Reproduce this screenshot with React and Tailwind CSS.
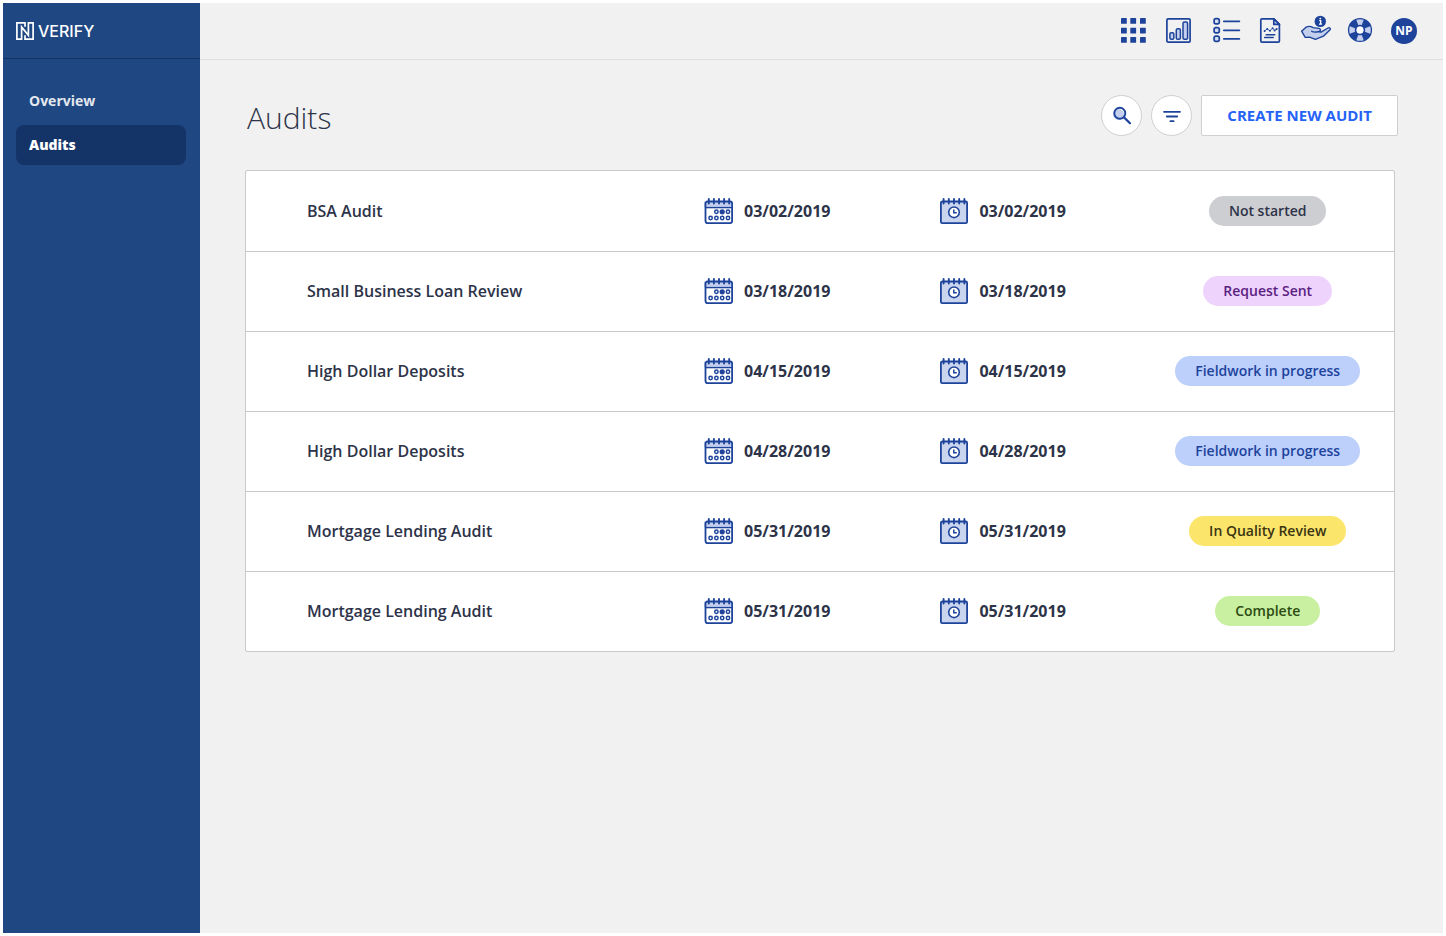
import { useState } from 'react';
import clsx from 'clsx';

const NAV_ITEMS = ['Overview', 'Audits'];

const AUDITS = [
  { id: 1, name: 'BSA Audit', start: '03/02/2019', due: '03/02/2019', status: 'Not started' },
  { id: 2, name: 'Small Business Loan Review', start: '03/18/2019', due: '03/18/2019', status: 'Request Sent' },
  { id: 3, name: 'High Dollar Deposits', start: '04/15/2019', due: '04/15/2019', status: 'Fieldwork in progress' },
  { id: 4, name: 'High Dollar Deposits', start: '04/28/2019', due: '04/28/2019', status: 'Fieldwork in progress' },
  { id: 5, name: 'Mortgage Lending Audit', start: '05/31/2019', due: '05/31/2019', status: 'In Quality Review' },
  { id: 6, name: 'Mortgage Lending Audit', start: '05/31/2019', due: '05/31/2019', status: 'Complete' },
];

const STATUS_STYLES = {
  'Not started': 'bg-[#cdced2] text-[#2d3348]',
  'Request Sent': 'bg-[#eed4fd] text-[#5b2181]',
  'Fieldwork in progress': 'bg-[#bcd0fb] text-[#1d439b]',
  'In Quality Review': 'bg-[#fbe56a] text-[#3a3413]',
  Complete: 'bg-[#c8f0a0] text-[#2c4a12]',
};

const Logo = () => (
  <svg className="w-[18px] h-[18px]" viewBox="0 0 18 18" fill="none" stroke="#fff" strokeWidth="1.7">
    <path d="M9 4.8V.9H.9v16.2h4.7V5l6.8 8.4V.9h4.7v16.2H9v-3.9" />
  </svg>
);

const GridIcon = () => (
  <svg className="w-8 h-8" viewBox="0 0 32 32" fill="#1d439b">
    {[3, 12.7, 22].map((y) =>
      [4, 13.3, 23].map((x) => <rect key={`${x}-${y}`} x={x} y={y} width="5.8" height="5.8" rx=".4" />)
    )}
  </svg>
);

const ChartIcon = () => (
  <svg className="w-8 h-8" viewBox="0 0 32 32" fill="none" stroke="#1d439b" strokeWidth="1.7">
    <rect x="1.9" y="3.9" width="23.2" height="23.2" rx="1.2" />
    <g fill="#c3cfec" strokeWidth="1.5">
      <rect x="4.9" y="17.7" width="3.9" height="6.6" rx="1.4" />
      <rect x="11.3" y="13.7" width="4.1" height="10.6" rx="1.4" />
      <rect x="18" y="7" width="4.6" height="17.3" rx="1.4" />
    </g>
  </svg>
);

const ListIcon = () => (
  <svg className="w-[30px] h-8" viewBox="0 0 30 32" fill="none" stroke="#1d439b" strokeWidth="1.7" strokeLinecap="round">
    {[6.3, 15.3, 23.8].map((y) => (
      <g key={y}>
        <rect x="1.1" y={y - 2.6} width="5.2" height="5.2" rx="1.8" fill="#d5ddf0" />
        <path d={`M10.8 ${y}H26.4`} />
      </g>
    ))}
  </svg>
);

const ReportIcon = () => (
  <svg className="w-6 h-8" viewBox="0 0 24 32" fill="none" stroke="#1d439b" strokeWidth="1.7" strokeLinecap="round" strokeLinejoin="round">
    <path d="M14.8 3.8H3A1.2 1.2 0 0 0 1.8 5v21A1.2 1.2 0 0 0 3 27.2h16.2a1.2 1.2 0 0 0 1.2-1.2V9.4z" />
    <path d="M14.8 3.8v5.6h5.6z" fill="#c3cfec" />
    <path d="M5.6 16l2.6-2 2.8 1.800 2.600-2.600 2 2.200 2.200-1.400" strokeWidth=".8" />
    <g fill="#1d439b" stroke="none">
      <circle cx="5.6" cy="16" r="1" />
      <circle cx="8.2" cy="14" r="1" />
      <circle cx="11" cy="15.8" r="1" />
      <circle cx="13.6" cy="13.2" r="1" />
      <circle cx="15.6" cy="15.4" r="1" />
      <circle cx="17.6" cy="14" r="1" />
    </g>
    <path d="M7.2 19.7h8.600M5.600 22.600h8.600" strokeWidth="1.5" />
  </svg>
);

const HandIcon = () => (
  <svg className="w-8 h-8" viewBox="0 0 32 32" fill="none">
    <path
      d="M2.6 16.2L7 12.2c2-1 5-1 7 .4l6 .8c1.8.4 2 2.6.2 3.2l1.8.6 7-4.200c1.800-1 3 .6 1.800 2l-6.400 6.200-8 3.200-5.800-2.200-4.400.2z"
      fill="#c3cfec"
      stroke="#1d439b"
      strokeWidth="1.4"
      strokeLinejoin="round"
    />
    <path d="M12.6 16.2c1.4.9 3.2 1 4.8.8l3.4-.5" stroke="#1d439b" strokeWidth="1.3" strokeLinecap="round" />
    <circle cx="21.3" cy="6.4" r="5.7" fill="#1d439b" />
    <path d="M20.2 5.6h1.5v3.4M20 9.2h3" stroke="#fff" strokeWidth="1.3" />
    <circle cx="21.3" cy="3.6" r=".9" fill="#fff" />
  </svg>
);

const HelpIcon = () => (
  <svg className="w-7 h-8" viewBox="0 0 28 32" fill="none">
    <circle cx="13" cy="15" r="7.8" stroke="#1d439b" strokeWidth="8.6" />
    <circle
      cx="13"
      cy="15"
      r="8"
      stroke="#c3cfec"
      strokeWidth="5.6"
      pathLength="80"
      strokeDasharray="9 11"
      strokeDashoffset="4.5"
    />
    <circle cx="13" cy="15" r="3.4" fill="#fff" />
  </svg>
);

const SearchIcon = () => (
  <svg className="w-5 h-5" viewBox="0 0 20 20" fill="none">
    <circle cx="6.6" cy="8.4" r="5.4" fill="#c3cfec" />
    <circle cx="7.8" cy="7.2" r="5.5" stroke="#1d439b" strokeWidth="1.9" />
    <path d="M12 11.4l6 5.8" stroke="#1d439b" strokeWidth="2.2" strokeLinecap="round" />
  </svg>
);

const FilterIcon = () => (
  <svg className="w-5 h-5" viewBox="0 0 20 20" stroke="#1d439b" strokeWidth="1.8" strokeLinecap="round">
    <path d="M2 5.8h16M4.8 10.5h10.4M8.4 15.2h3.2" />
  </svg>
);

const CalendarIcon = () => (
  <svg className="w-[30px] h-7" viewBox="0 0 30 28" fill="none" stroke="#1d439b">
    <path d="M0 4.500h27.400v6H0z" fill="#c3cfec" stroke="none" />
    <rect x="1.5" y="4.5" width="26.6" height="21.6" rx="2" strokeWidth="1.8" />
    <path d="M2 10.6h26" strokeWidth="1.4" />
    <path d="M4.8 2v4.600M9.900 2v4.600M15 2v4.600M20.100 2v4.600M25.200 2v4.600" strokeWidth="1.9" strokeLinecap="round" />
    <g strokeWidth="1.5">
      <circle cx="12.4" cy="14.8" r="1.7" />
      <circle cx="18.2" cy="14.8" r="1.9" fill="#1d439b" />
      <circle cx="24" cy="14.8" r="1.7" />
      <circle cx="6.6" cy="21" r="1.7" />
      <circle cx="12.4" cy="21" r="1.7" />
      <circle cx="18.2" cy="21" r="1.7" />
      <circle cx="24" cy="21" r="1.7" />
    </g>
  </svg>
);

const DeadlineIcon = () => (
  <svg className="w-[30px] h-7" viewBox="0 0 30 28" fill="none" stroke="#1d439b">
    <rect x="1.9" y="4.5" width="26.2" height="21.6" rx="1.4" fill="#c9d4ee" strokeWidth="1.8" />
    <path d="M4.6 2v4.600M9.800 2v4.600M15 2v4.600M20.200 2v4.600M25.400 2v4.600" strokeWidth="1.9" strokeLinecap="round" />
    <circle cx="15" cy="15.3" r="5.3" fill="#fff" strokeWidth="1.6" />
    <path d="M14.8 12.6v3.100h3" strokeWidth="1.5" />
  </svg>
);

const HEADER_LINKS = [
  { label: 'Apps', Icon: GridIcon },
  { label: 'Analytics', Icon: ChartIcon },
  { label: 'Tasks', Icon: ListIcon },
  { label: 'Reports', Icon: ReportIcon },
  { label: 'Services', Icon: HandIcon },
  { label: 'Help', Icon: HelpIcon },
];

const App = () => {
  const [active, setActive] = useState('Audits');

  return (
    <div className="min-h-screen bg-white p-[3px] flex font-['Open_Sans',sans-serif] text-[#2d3348]">
      {/* Sidebar */}
      <aside className="w-[197px] shrink-0 bg-[#1f4782]">
        <div className="h-14 px-[13px] flex items-center gap-1 border-b border-[#143468]">
          <Logo />
          <span className="font-['Inter',sans-serif] text-base font-medium text-white">VERIFY</span>
        </div>
        <nav className="flex flex-col gap-1 pt-[22px] pl-[13px] pr-3.5">
          {NAV_ITEMS.map((item) => (
            <a
              key={item}
              href={`#${item.toLowerCase()}`}
              onClick={() => setActive(item)}
              className={clsx(
                'h-10 px-[13px] flex items-center rounded-lg text-sm',
                active === item ? 'bg-[#143468] text-white font-extrabold' : 'text-[#e4e8ef] font-bold'
              )}
            >
              {item}
            </a>
          ))}
        </nav>
      </aside>

      <div className="flex-1 min-w-0 bg-[#f1f1f1]">
        {/* Top bar */}
        <header className="h-[57px] pr-[26px] flex items-center justify-end gap-4 border-b border-[#dedede]">
          {HEADER_LINKS.map(({ label, Icon }) => (
            <button key={label} type="button" aria-label={label}>
              <Icon />
            </button>
          ))}
          <button type="button" className="w-[26px] h-[26px] rounded-full bg-[#1d439b] text-white text-xs font-bold">
            NP
          </button>
        </header>

        <main className="pl-[45px] pr-12">
          {/* Title and actions */}
          <div className="pt-[35px] flex items-center justify-between -mr-[3px]">
            <h1 className="text-3xl font-light pl-0.5 pt-1">Audits</h1>
            <div className="flex gap-[9px]">
              <button type="button" aria-label="Search" className="w-[41px] h-[41px] rounded-full border border-[#cfcfd2] bg-white flex items-center justify-center">
                <SearchIcon />
              </button>
              <button type="button" aria-label="Filter" className="w-[41px] h-[41px] rounded-full border border-[#cfcfd2] bg-white flex items-center justify-center">
                <FilterIcon />
              </button>
              <button type="button" className="h-[41px] px-[25px] rounded-xs border border-[#cfcfd2] bg-white text-[15px] font-bold text-[#2563f5]">
                CREATE NEW AUDIT
              </button>
            </div>
          </div>

          {/* Audit list */}
          <div className="mt-[34px] rounded-xs border border-[#c8c9cb] bg-white">
            <table className="w-full table-fixed">
              <colgroup>
                <col className="w-[39.9%]" />
                <col className="w-[20.5%]" />
                <col className="w-[17.6%]" />
                <col className="w-[22%]" />
              </colgroup>
              <tbody>
                {AUDITS.map((audit) => (
                  <tr key={audit.id} className="h-20 border-b border-[#c8c9cb] last:border-b-0">
                    <td className="pl-[61px] text-base font-semibold">{audit.name}</td>
                    <td>
                      <div className="flex items-center gap-2.5 font-bold">
                        <CalendarIcon />
                        {audit.start}
                      </div>
                    </td>
                    <td>
                      <div className="flex items-center gap-2.5 font-bold">
                        <DeadlineIcon />
                        {audit.due}
                      </div>
                    </td>
                    <td className="text-center">
                      <span className={clsx('inline-flex h-[30px] items-center rounded-full px-5 text-sm font-semibold', STATUS_STYLES[audit.status])}>
                        {audit.status}
                      </span>
                    </td>
                  </tr>
                ))}
              </tbody>
            </table>
          </div>
        </main>
      </div>
    </div>
  );
};

export default App;
